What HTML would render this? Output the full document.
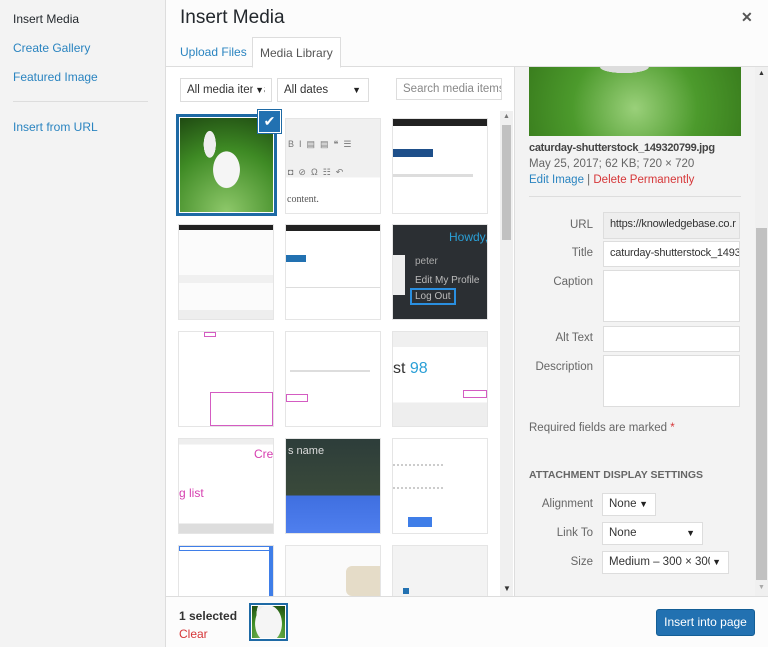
<!DOCTYPE html>
<html><head><meta charset="utf-8"><style>
*{box-sizing:border-box;margin:0;padding:0}
body{width:768px;height:647px;overflow:hidden;font-family:"Liberation Sans",sans-serif;font-size:12px;color:#444;background:#fff;position:relative}
.abs{position:absolute}
.side{left:0;top:0;width:166px;height:647px;background:#f3f3f3;border-right:1px solid #ddd}
.side a{position:absolute;left:13px;color:#2a84c0;font-size:12px;text-decoration:none}
.hdr{left:166px;top:0;width:602px;height:67px;background:#fcfcfc;border-bottom:1px solid #ddd}
h1{position:absolute;left:180px;top:7px;font-size:19px;font-weight:normal;color:#23282d}
.tab{position:absolute;top:37px;height:31px;font-size:12px;padding:8px 7px;white-space:nowrap}
.sel{border:1px solid #ddd;background:#fff;font-size:11.5px;color:#333;padding:0 6px;line-height:22px;position:absolute;height:24px;white-space:nowrap;overflow:hidden}
.sel b{position:absolute;right:7px;top:0;font-size:9px;color:#222;background:#fff;padding-left:2px}
.th{position:absolute;width:94px;height:94px;overflow:hidden;background:#fff;box-shadow:0 0 0 1px #e5e5e5}
.rp{left:514px;top:67px;width:254px;height:529px;background:#f3f3f3;border-left:1px solid #ddd}
.lbl{position:absolute;font-size:11.5px;color:#666;text-align:right;width:80px}
.inp{position:absolute;left:603px;width:137px;background:#fff;border:1px solid #ddd;font-size:11px;color:#333;padding:5px 6px;white-space:nowrap;overflow:hidden;letter-spacing:-0.2px}
.foot{left:166px;top:596px;width:602px;height:51px;background:#fcfcfc;border-top:1px solid #ddd}
.cat{background:radial-gradient(ellipse 22px 30px at 50% 55%,#f5f5f5 60%,transparent 62%),radial-gradient(ellipse 10px 22px at 32% 28%,#eee 60%,transparent 62%),radial-gradient(circle at 50% 100%,#8ec86a,#3e8a24 60%,#1f4a12)}
</style></head><body>
<div class="abs side">
<div style="position:absolute;left:13px;top:12px;color:#23282d">Insert Media</div>
<a style="top:41px">Create Gallery</a>
<a style="top:70px">Featured Image</a>
<div style="position:absolute;left:13px;top:101px;width:135px;border-top:1px solid #ddd"></div>
<a style="top:120px">Insert from URL</a>
</div>
<div class="abs hdr"></div>
<h1>Insert Media</h1>
<div style="position:absolute;left:741px;top:9px;font-size:14px;font-weight:bold;color:#555">✕</div>
<div class="tab" style="left:173px;color:#2a84c0">Upload Files</div>
<div class="tab" style="left:252px;border:1px solid #ddd;border-bottom:1px solid #fff;background:#fff;color:#555;width:89px">Media Library</div>
<div class="sel" style="left:180px;top:78px;width:92px">All media items<b>▼</b></div>
<div class="sel" style="left:277px;top:78px;width:92px">All dates<b>▼</b></div>
<div class="sel" style="left:396px;top:78px;width:106px;color:#888;height:22px;line-height:20px">Search media items</div>
<div class="abs" style="left:500px;top:111px;width:13px;height:485px;background:#f0f0f0"></div>
<div class="abs" style="left:502px;top:125px;width:9px;height:115px;background:#c1c1c1"></div>
<div class="abs" style="left:503px;top:113px;font-size:7px;color:#777">▲</div>
<div class="abs" style="left:503px;top:584px;font-size:8px;color:#333">▼</div>
<div class="abs" style="left:176px;top:114px;width:101px;height:102px;border:3px solid #1e6aa5;background:#fff;padding:1px"><div class="cat" style="width:93px;height:94px"></div></div>
<div class="abs" style="left:258px;top:110px;width:23px;height:23px;background:#2271b1;border:1px solid #fff;color:#fff;font-size:14px;text-align:center;line-height:21px;box-shadow:0 0 0 1px #1e6aa5">✔</div>
<div class="th" style="left:286px;top:119px;background:linear-gradient(#f0f0f0 0,#f0f0f0 62%,#fff 62%)"><div style="position:absolute;left:2px;top:20px;font-size:9px;color:#777;letter-spacing:5px">BI▤▤❝☰</div><div style="position:absolute;left:2px;top:48px;font-size:9px;color:#777;letter-spacing:5px">◘⊘Ω☷↶</div><div style="position:absolute;left:1px;top:75px;font-family:'Liberation Serif';font-size:10px;color:#555">content.</div></div>
<div class="th" style="left:393px;top:119px;background:#fff"><div style="height:7px;background:#222"></div><div style="position:absolute;left:0;top:30px;width:40px;height:8px;background:#1e4f8a"></div><div style="position:absolute;left:0;top:55px;width:80px;height:3px;background:#ddd"></div></div>
<div class="th" style="left:179px;top:225px;background:#fbfbfb"><div style="height:5px;background:#222"></div><div style="position:absolute;top:50px;width:94px;height:8px;background:#f0f0f0"></div><div style="position:absolute;top:85px;width:94px;height:9px;background:#eee"></div></div>
<div class="th" style="left:286px;top:225px;background:#fff"><div style="height:6px;background:#222"></div><div style="position:absolute;top:30px;width:20px;height:7px;background:#2271b1"></div><div style="position:absolute;top:62px;width:94px;height:1px;background:#ddd"></div></div>
<div class="th" style="left:393px;top:225px;background:#2b2f33"><div style="position:absolute;left:56px;top:5px;color:#2a9fd6;font-size:12px;white-space:nowrap">Howdy, pe</div><div style="position:absolute;left:22px;top:31px;color:#aaa;font-size:10px">peter</div><div style="position:absolute;left:22px;top:50px;color:#bbb;font-size:10px;white-space:nowrap">Edit My Profile</div><div style="position:absolute;left:17px;top:63px;border:2px solid #2a8fe0;color:#bbb;font-size:10px;padding:1px 3px">Log Out</div><div style="position:absolute;left:0;top:30px;width:12px;height:40px;background:#eee"></div></div>
<div class="th" style="left:179px;top:332px;background:#fff"><div style="position:absolute;left:31px;top:60px;width:63px;height:34px;border:1px solid #d45cc2"></div><div style="position:absolute;left:25px;top:0;width:12px;height:5px;border:1px solid #d45cc2"></div></div>
<div class="th" style="left:286px;top:332px;background:#fff"><div style="position:absolute;left:0;top:62px;width:22px;height:8px;border:1px solid #d45cc2"></div><div style="position:absolute;left:4px;top:38px;width:80px;height:2px;background:#ddd"></div></div>
<div class="th" style="left:393px;top:332px;background:linear-gradient(#f0f0f0 0,#f0f0f0 16%,#fff 16%,#fff 75%,#eee 75%)"><div style="position:absolute;left:0;top:28px;font-size:16px;color:#333">st <span style="color:#2a9fd6">98</span></div><div style="position:absolute;left:70px;top:58px;width:24px;height:8px;border:1px solid #d45cc2"></div></div>
<div class="th" style="left:179px;top:439px;background:linear-gradient(#eee 0,#eee 6%,#fff 6%,#fff 90%,#ddd 90%)"><div style="position:absolute;left:75px;top:8px;color:#d63fb0;font-size:12px">Creat</div><div style="position:absolute;left:0;top:47px;color:#d63fb0;font-size:12px">g list</div></div>
<div class="th" style="left:286px;top:439px;background:linear-gradient(#2d3d3a 0,#3a4a3a 60%,#3f6fe0 60%,#4f7fee 100%)"><div style="position:absolute;left:2px;top:6px;color:#ddd;font-size:11px">s name</div></div>
<div class="th" style="left:393px;top:439px;background:#fff"><div style="position:absolute;left:15px;top:78px;width:24px;height:10px;background:#3f7ee8"></div><div style="position:absolute;left:0;top:25px;width:50px;height:25px;border-top:2px dotted #ccc;border-bottom:2px dotted #ccc"></div></div>
<div class="th" style="left:179px;top:546px;height:50px;background:#fff"><div style="height:5px;border:1px solid #3f7ee8"></div><div style="position:absolute;right:0;top:0;width:4px;height:50px;background:#3f7ee8"></div></div>
<div class="th" style="left:286px;top:546px;height:50px;background:#fafafa"><div style="position:absolute;left:60px;top:20px;width:40px;height:30px;background:#e5dcc8;border-radius:6px"></div></div>
<div class="th" style="left:393px;top:546px;height:50px;background:#f3f3f3"><div style="position:absolute;left:10px;top:42px;width:6px;height:6px;background:#2271b1"></div></div>
<div class="abs rp"></div>
<div class="abs" style="left:529px;top:67px;width:212px;height:69px;background:radial-gradient(ellipse 40px 10px at 45% 0,#ddd 60%,transparent 62%),radial-gradient(circle at 50% 60%,#9ad07a,#4c9a2c 55%,#3a7e1e)"></div>
<div class="abs" style="left:529px;top:142px;font-size:11px;font-weight:bold;color:#444;letter-spacing:-0.3px">caturday-shutterstock_149320799.jpg</div>
<div class="abs" style="left:529px;top:158px;font-size:11.5px;color:#666">May 25, 2017; 62 KB; 720 × 720</div>
<div class="abs" style="left:529px;top:174px;font-size:11.5px;color:#2a84c0">Edit Image <span style="color:#666">|</span> <span style="color:#d63638">Delete Permanently</span></div>
<div class="abs" style="left:529px;top:196px;width:212px;border-top:1px solid #ddd"></div>
<div class="lbl" style="left:513px;top:219px">URL</div>
<div class="inp" style="top:212px;height:27px;background:#eee">https://knowledgebase.co.r</div>
<div class="lbl" style="left:513px;top:247px">Title</div>
<div class="inp" style="top:241px;height:26px">caturday-shutterstock_1493</div>
<div class="lbl" style="left:513px;top:276px">Caption</div>
<div class="inp" style="top:270px;height:52px"></div>
<div class="lbl" style="left:513px;top:332px">Alt Text</div>
<div class="inp" style="top:326px;height:26px"></div>
<div class="lbl" style="left:513px;top:361px">Description</div>
<div class="inp" style="top:355px;height:52px"></div>
<div class="abs" style="left:529px;top:422px;font-size:11.5px;color:#666">Required fields are marked <span style="color:#d63638">*</span></div>
<div class="abs" style="left:529px;top:469px;font-size:10.5px;font-weight:bold;color:#666">ATTACHMENT DISPLAY SETTINGS</div>
<div class="lbl" style="left:513px;top:498px">Alignment</div>
<div class="sel" style="left:602px;top:493px;width:54px;height:23px;line-height:21px">None<b>▼</b></div>
<div class="lbl" style="left:513px;top:527px">Link To</div>
<div class="sel" style="left:602px;top:522px;width:101px;height:23px;line-height:21px">None<b>▼</b></div>
<div class="lbl" style="left:513px;top:556px">Size</div>
<div class="sel" style="left:602px;top:551px;width:127px;height:23px;line-height:21px">Medium – 300 × 300<b>▼</b></div>
<div class="abs" style="left:755px;top:67px;width:13px;height:529px;background:#f0f0f0"></div>
<div class="abs" style="left:756px;top:228px;width:11px;height:352px;background:#c1c1c1"></div>
<div class="abs" style="left:758px;top:70px;font-size:7px;color:#333">▲</div>
<div class="abs" style="left:758px;top:584px;font-size:7px;color:#aaa">▼</div>
<div class="abs foot"></div>
<div class="abs" style="left:179px;top:609px;font-size:12px;font-weight:bold;color:#333">1 selected</div>
<div class="abs" style="left:179px;top:627px;font-size:12px;color:#d63638">Clear</div>
<div class="abs" style="left:249px;top:603px;width:39px;height:38px;border:2px solid #1e6aa5;padding:1px;background:#fff"><div class="cat" style="width:33px;height:32px"></div></div>
<div class="abs" style="left:656px;top:609px;width:99px;height:27px;background:#2271b1;border:1px solid #135e96;border-radius:3px;color:#fff;font-size:12px;text-align:center;line-height:25px">Insert into page</div>
</body></html>
